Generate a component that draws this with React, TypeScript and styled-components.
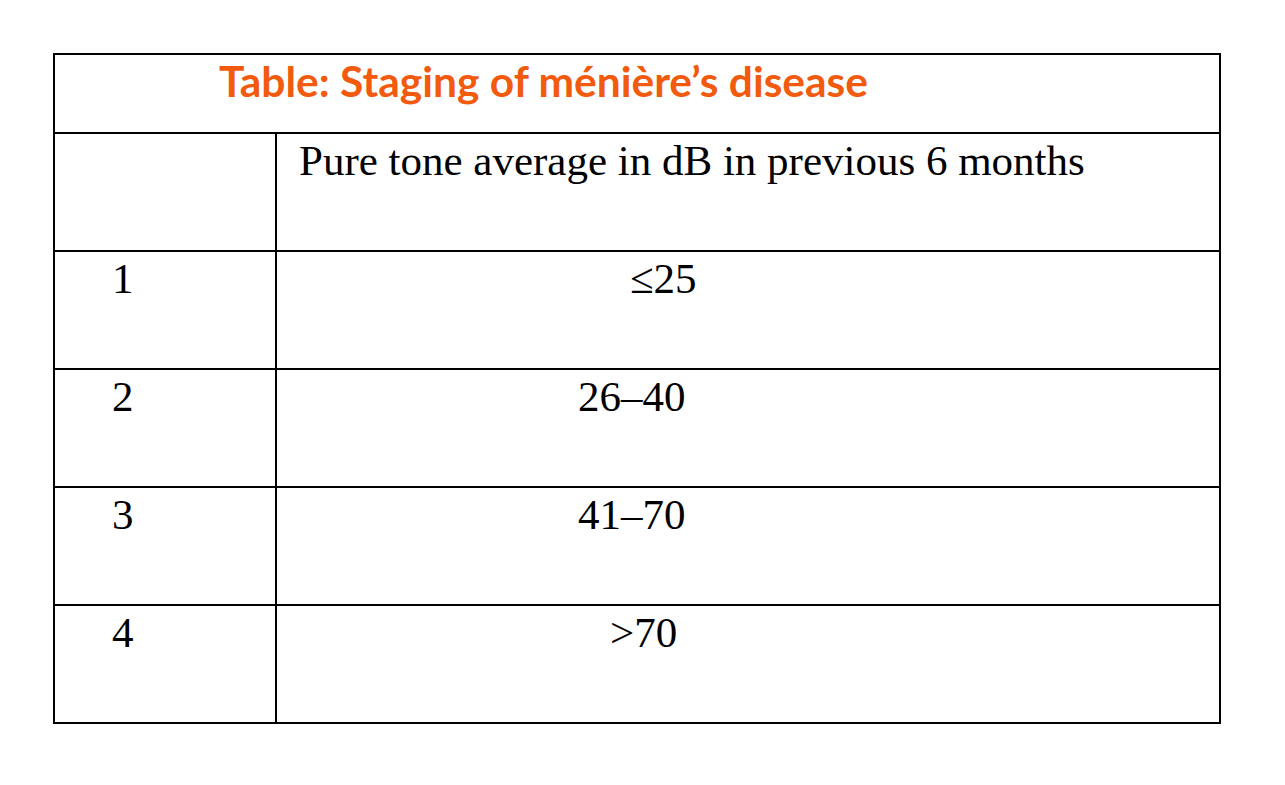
import React from "react";
import styled, { createGlobalStyle } from "styled-components";

const Global = createGlobalStyle`
  html, body { margin: 0; padding: 0; background: #ffffff; }
  body { font-family: "Liberation Serif", "Times New Roman", serif; }
`;

const Page = styled.div`
  padding: 53px 0 0 53px;
  width: 1285px;
  height: 785px;
  box-sizing: border-box;
`;

const Grid = styled.div`
  display: grid;
  grid-template-columns: 220px 942px;
  grid-template-rows: 77px repeat(5, 116px);
  gap: 2px;
  padding: 2px;
  background: #000000;
  width: 1168px;
  box-sizing: border-box;
`;

const TitleCell = styled.div`
  grid-column: 1 / span 2;
  background: #ffffff;
  padding: 2px 0 0 164px;
  font-family: "Lato", "Open Sans", sans-serif;
  font-weight: 700;
  font-size: 42.5px;
  line-height: 48px;
  color: #f25a0e;
  white-space: nowrap;
`;

const Cell = styled.div<{ $indent: number }>`
  background: #ffffff;
  padding: 4px 0 0 ${(p) => p.$indent}px;
  font-family: "Liberation Serif", "Times New Roman", serif;
  font-size: 43px;
  line-height: 46px;
  color: #000000;
  white-space: nowrap;
`;

const rows = [
  { stage: "1", value: "≤25", indent: 353 },
  { stage: "2", value: "26–40", indent: 301 },
  { stage: "3", value: "41–70", indent: 301 },
  { stage: "4", value: ">70", indent: 333 },
];

export default function App() {
  return (
    <Page>
      <Global />
      <Grid>
        <TitleCell>Table: Staging of ménière’s disease</TitleCell>
        <Cell $indent={0} />
        <Cell $indent={22}>Pure tone average in dB in previous 6 months</Cell>
        {rows.map((r) => (
          <React.Fragment key={r.stage}>
            <Cell $indent={57}>{r.stage}</Cell>
            <Cell $indent={r.indent}>{r.value}</Cell>
          </React.Fragment>
        ))}
      </Grid>
    </Page>
  );
}
